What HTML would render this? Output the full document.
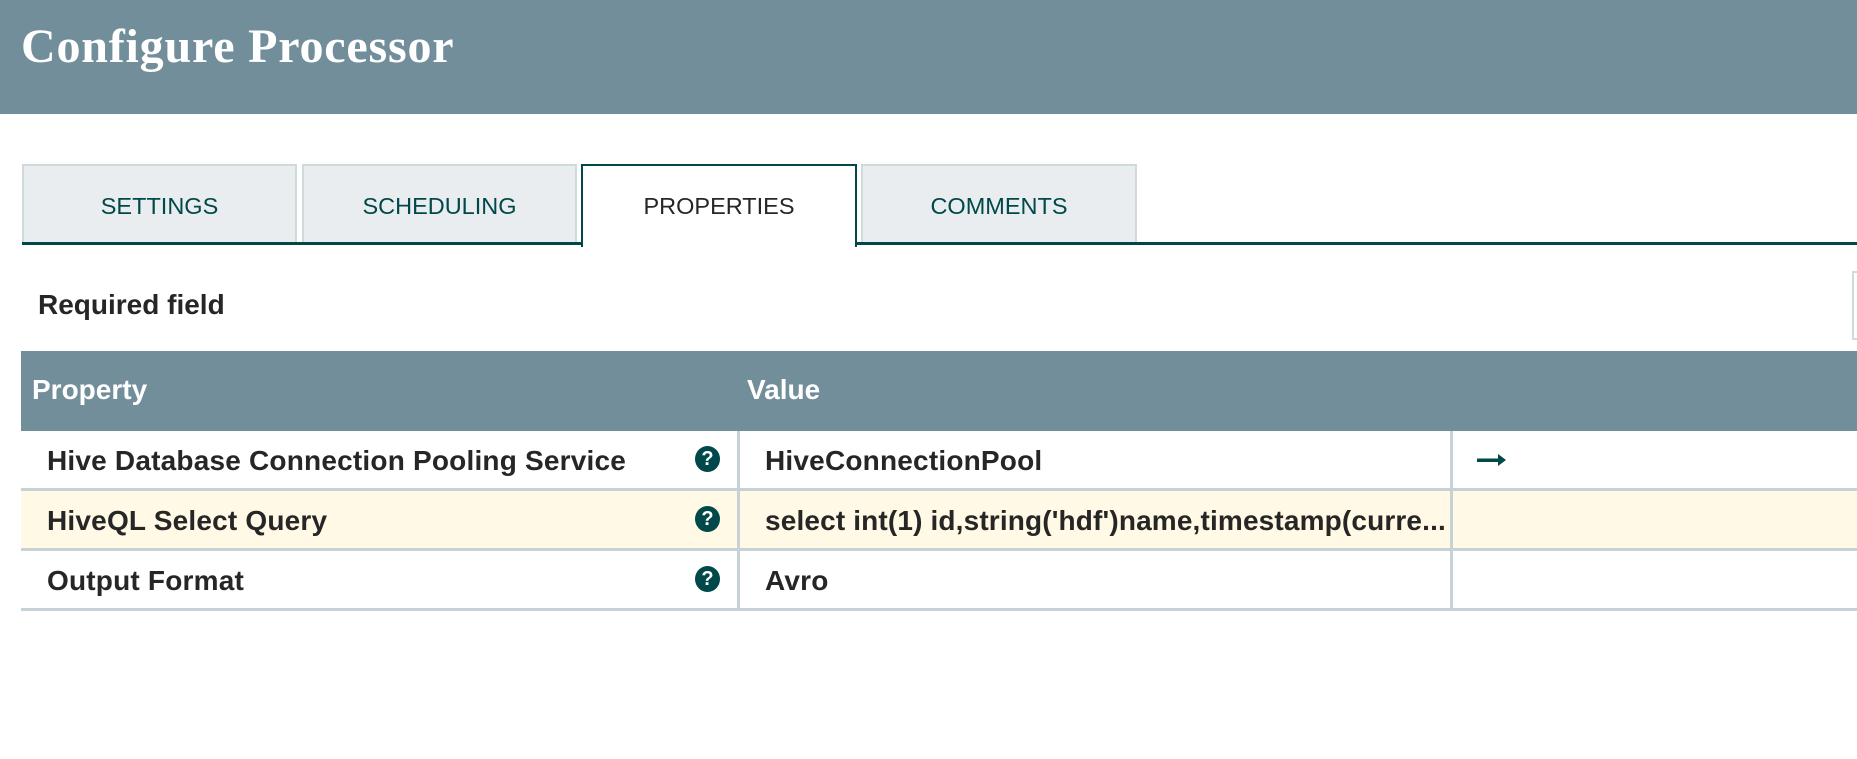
<!DOCTYPE html>
<html><head><meta charset="utf-8">
<style>
html,body{margin:0;padding:0;}
body{width:1857px;height:759px;position:relative;overflow:hidden;background:#fff;font-family:"Liberation Sans",Arial,sans-serif;}
.hdr{position:absolute;left:0;top:0;width:1857px;height:114px;background:#728e9b;}
.title{position:absolute;left:21px;top:19px;font-family:"Liberation Serif",serif;font-weight:bold;font-size:48px;color:#fff;letter-spacing:0.8px;}
.tab{position:absolute;top:164px;height:79px;background:#e9edf0;border:2px solid #cfdadb;border-bottom:none;box-sizing:border-box;text-align:center;line-height:81px;font-size:23.5px;color:#004849;}
.tab.sel{background:#fff;border:2px solid #004849;border-bottom:none;color:#262626;height:83px;z-index:2;}
.line{position:absolute;top:242px;height:3px;background:#004849;}
.req{position:absolute;left:38px;top:289px;font-weight:bold;font-size:28px;color:#262626;}
.btn{position:absolute;left:1852px;top:271px;width:10px;height:69px;border:2px solid #cfdadb;box-sizing:border-box;}
.th{position:absolute;left:21px;top:351px;width:1836px;height:80px;background:#728e9b;}
.th span{position:absolute;top:23px;font-weight:bold;font-size:28px;color:#fff;}
.row{position:absolute;left:21px;width:1836px;height:57px;border-bottom:3px solid #c7d2d7;}
.cell{position:absolute;top:1px;font-weight:bold;font-size:28px;color:#262626;line-height:57px;white-space:nowrap;letter-spacing:0.2px;}
.vsep{position:absolute;top:431px;width:3px;height:178px;background:#c7d2d7;}
.help{position:absolute;left:695px;width:25px;height:26px;border-radius:50%;background:#004849;color:#fff;font-weight:bold;font-size:20px;line-height:26px;text-align:center;}
</style></head><body>
<div class="hdr"><div class="title">Configure Processor</div></div>

<div class="tab" style="left:22px;width:275px;">SETTINGS</div>
<div class="tab" style="left:302px;width:275px;">SCHEDULING</div>
<div class="tab sel" style="left:581px;width:276px;">PROPERTIES</div>
<div class="tab" style="left:861px;width:276px;">COMMENTS</div>
<div class="line" style="left:22px;width:561px;"></div>
<div class="line" style="left:855px;width:1002px;"></div>

<div class="req">Required field</div>
<div class="btn"></div>

<div class="th"><span style="left:11px;">Property</span><span style="left:726px;">Value</span></div>

<div class="row" style="top:431px;background:#fff;">
  <div class="cell" style="left:26px;">Hive Database Connection Pooling Service</div>
  <div class="cell" style="left:744px;">HiveConnectionPool</div>
  <svg style="position:absolute;left:1456px;top:22px" width="30" height="14" viewBox="0 0 30 14"><rect x="0" y="5.5" width="22" height="3.5" fill="#004849"/><path d="M21 1 L29 7 L21 13 Z" fill="#004849"/></svg>
</div>
<div class="row" style="top:491px;background:#fff9e6;">
  <div class="cell" style="left:26px;">HiveQL Select Query</div>
  <div class="cell" style="left:744px;letter-spacing:0.15px;">select int(1) id,string('hdf')name,timestamp(curre...</div>
</div>
<div class="row" style="top:551px;background:#fff;">
  <div class="cell" style="left:26px;">Output Format</div>
  <div class="cell" style="left:744px;">Avro</div>
</div>
<div class="help" style="top:446px;">?</div>
<div class="help" style="top:506px;">?</div>
<div class="help" style="top:566px;">?</div>
<div class="vsep" style="left:737px;"></div>
<div class="vsep" style="left:1450px;"></div>
</body></html>
